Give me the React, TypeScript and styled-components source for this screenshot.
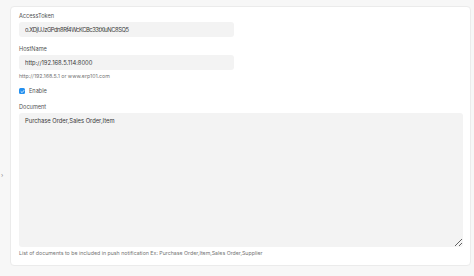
import React from 'react';
import styled, { createGlobalStyle } from 'styled-components';

const GlobalStyle = createGlobalStyle`
  html, body {
    margin: 0;
    padding: 0;
    background: #f7f7f7;
    font-family: Inter, "Noto Sans", sans-serif;
  }
  #root {
    height: 276px;
  }
`;

const Page = styled.div`
  display: flex;
  height: 276px;
  box-sizing: border-box;
  padding: 6px 3px 10px 0;
`;

const Gutter = styled.div`
  width: 10px;
  display: flex;
  align-items: center;
  padding-top: 76px;
  box-sizing: border-box;
  span {
    font-size: 6px;
    color: #8a8a8a;
    margin-left: 1px;
  }
`;

const Card = styled.div`
  flex: 1;
  background: #fff;
  border: 1px solid #ebebeb;
  border-radius: 4px;
  padding: 5px 7px 8px 8px;
  display: flex;
  flex-direction: column;
  box-sizing: border-box;
`;

const Field = styled.div<{ $grow?: boolean }>`
  display: flex;
  flex-direction: column;
  margin-bottom: 8px;
  ${(p) => (p.$grow ? 'flex: 1; margin-bottom: 0;' : '')}
`;

const Label = styled.label`
  font-size: 5.6px;
  line-height: 8px;
  height: 8px;
  color: #525252;
  margin-bottom: 2px;
`;

const Input = styled.input<{ $tight?: boolean }>`
  width: 215px;
  height: 15px;
  box-sizing: border-box;
  border: none;
  outline: none;
  border-radius: 3px;
  background: #f3f3f3;
  padding: 0 6px;
  font-family: inherit;
  font-size: 5.8px;
  letter-spacing: ${(p) => (p.$tight ? '-0.45px' : '0')};
  color: #383838;
`;

const TextArea = styled.textarea`
  flex: 1;
  width: 100%;
  box-sizing: border-box;
  border: none;
  outline: none;
  border-radius: 3px;
  background: #f3f3f3;
  padding: 4px 6px;
  font-family: inherit;
  font-size: 5.8px;
  line-height: 8px;
  color: #383838;
  resize: vertical;
`;

const Description = styled.div`
  font-size: 5.25px;
  line-height: 8px;
  color: #747474;
  margin-top: 2px;
`;

const CheckRow = styled.label`
  display: flex;
  align-items: center;
  gap: 4px;
  height: 8px;
  margin: -1px 0 8px;
  font-size: 5.6px;
  color: #525252;
`;

const Box = styled.span`
  width: 6px;
  height: 6px;
  border-radius: 1.5px;
  background: #2490ef;
  display: flex;
  align-items: center;
  justify-content: center;
`;

const App: React.FC = () => (
  <>
    <GlobalStyle />
    <Page>
      <Gutter>
        <span>›</span>
      </Gutter>
      <Card>
        <Field>
          <Label>AccessToken</Label>
          <Input $tight readOnly value="o.XDjUJzGPdn8Rf4WcKCBc33tXluNC8SQ5" />
        </Field>
        <Field>
          <Label>HostName</Label>
          <Input readOnly value="http://192.168.5.114:8000" />
          <Description>http://192.168.5.1 or www.erp101.com</Description>
        </Field>
        <CheckRow>
          <Box>
            <svg width="5" height="5" viewBox="0 0 10 10">
              <path d="M2 5.2 L4.2 7.3 L8 2.8" fill="none" stroke="#fff" strokeWidth="1.6" strokeLinecap="round" strokeLinejoin="round" />
            </svg>
          </Box>
          Enable
        </CheckRow>
        <Field $grow>
          <Label>Document</Label>
          <TextArea readOnly value="Purchase Order,Sales Order,Item" />
          <Description>
            List of documents to be included in push notification Ex: Purchase Order,Item,Sales Order,Supplier
          </Description>
        </Field>
      </Card>
    </Page>
  </>
);

export default App;
